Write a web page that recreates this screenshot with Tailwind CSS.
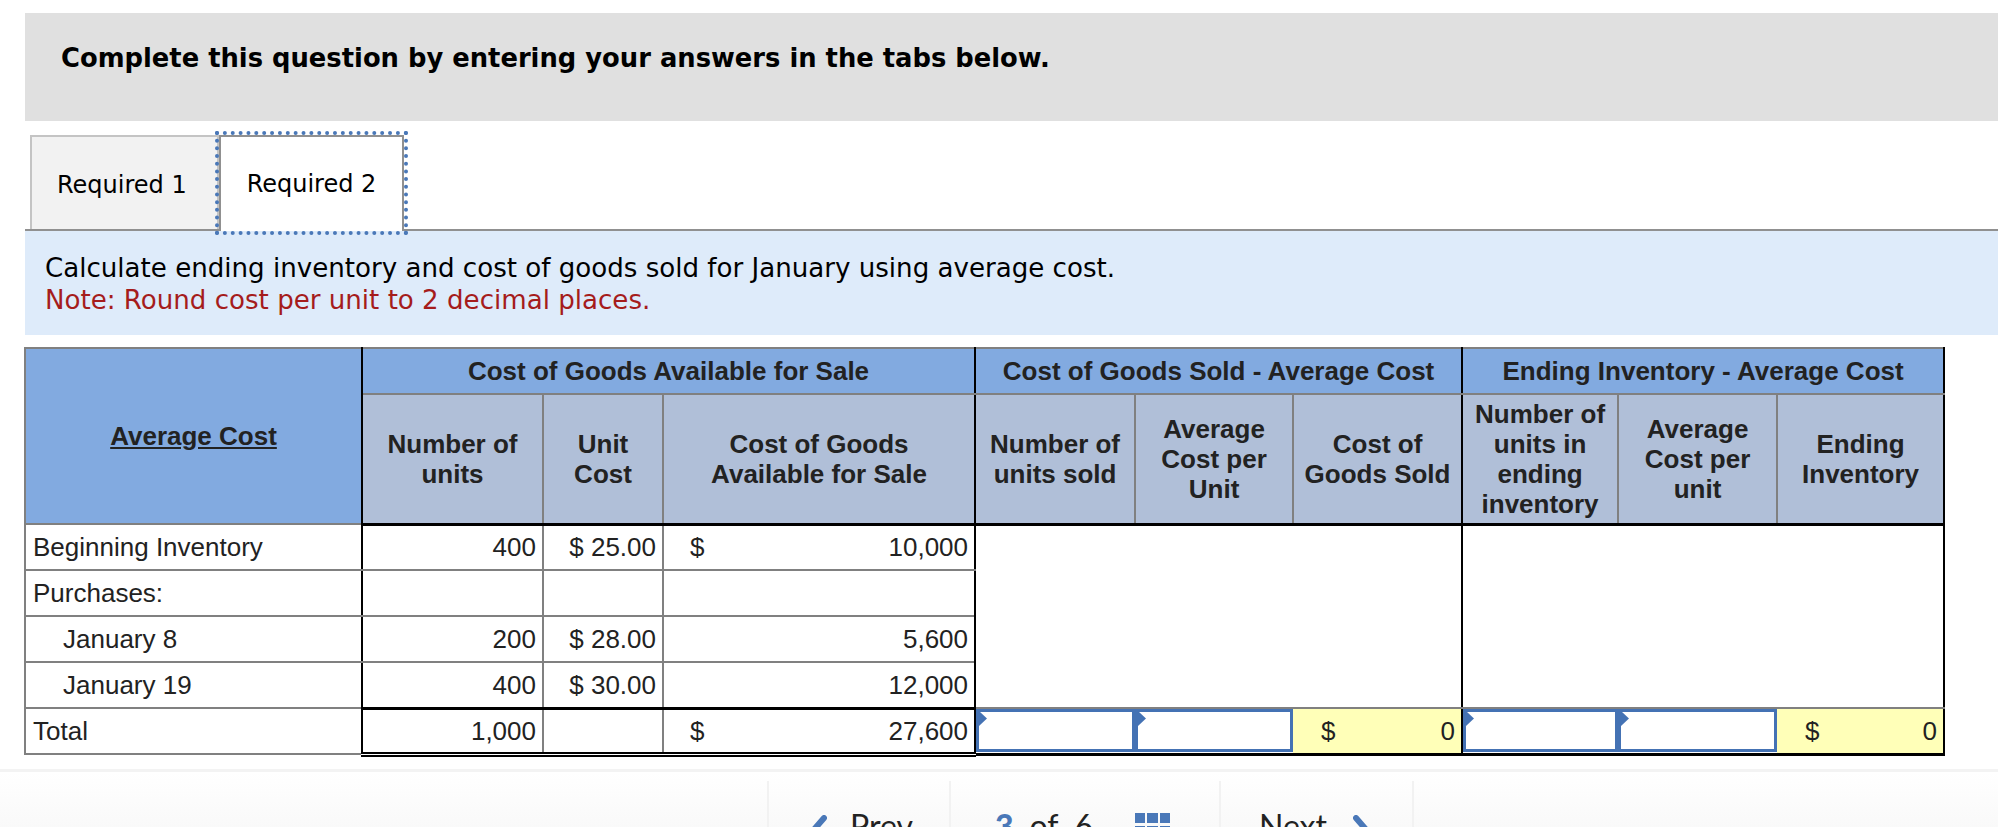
<!DOCTYPE html>
<html lang="en">
  <head>
    <meta charset="UTF-8" />
    <meta name="viewport" content="width=device-width, initial-scale=1.0" />
    <title>Average Cost</title>
    <script src="https://cdn.jsdelivr.net/npm/@tailwindcss/browser@4"></script>
  </head>

  <body class="bg-white h-[827px] overflow-hidden pt-[13px] font-['DejaVu_Sans',sans-serif] text-black">
    <!-- instructions -->
    <div class="ml-[25px] h-[108px] bg-[#e0e0e0] pl-[36px] pt-[28px]">
      <p class="text-[25.8px] leading-[34px] font-bold">Complete this question by entering your answers in the tabs below.</p>
    </div>

    <!-- tabs -->
    <div class="ml-[25px] mt-[14px] h-[96px] flex items-end border-b-2 border-[#909090] pl-[5px]">
      <div class="w-[189px] h-[94px] bg-[#f2f2f2] border-2 border-b-0 border-[#c4c4c4] flex items-center pl-[25px] pt-[3px] text-[24px]">Required 1</div>
      <div class="relative w-[185px] h-[96px] -mb-[2px] bg-white border-2 border-b-0 border-[#909090] outline-[4px] outline-dotted outline-[#4a78b8] flex items-center justify-center text-[24px]">Required 2</div>
    </div>

    <!-- question text -->
    <div class="ml-[25px] h-[104px] bg-[#deebfa] pl-[20px] pt-[21px] text-[26.1px] leading-[32px]">
      <p>Calculate ending inventory and cost of goods sold for January using average cost.</p>
      <p class="text-[#a51c1c]">Note: Round cost per unit to 2 decimal places.</p>
    </div>

    <!-- worksheet -->
    <table class="ml-[24px] mt-[12px] w-[1919px] table-fixed border-collapse font-['Liberation_Sans',Arial,sans-serif] text-[26px] leading-[30px] text-[#222]">
      <colgroup>
        <col class="w-[337px]" />
        <col class="w-[181px]" />
        <col class="w-[120px]" />
        <col class="w-[312px]" />
        <col class="w-[160px]" />
        <col class="w-[158px]" />
        <col class="w-[169px]" />
        <col class="w-[156px]" />
        <col class="w-[159px]" />
        <col class="w-[167px]" />
      </colgroup>
      <thead class="font-bold text-center">
        <tr class="h-[46px] bg-[#82aae0]">
          <th rowspan="2" class="border-2 border-[#808080] border-r-black border-b-[#808080] underline">Average Cost</th>
          <th colspan="3" class="border-2 border-[#808080] border-x-black">Cost of Goods Available for Sale</th>
          <th colspan="3" class="border-2 border-[#808080] border-x-black">Cost of Goods Sold - Average Cost</th>
          <th colspan="3" class="border-2 border-[#808080] border-x-black">Ending Inventory - Average Cost</th>
        </tr>
        <tr class="h-[130px] bg-[#b0bfd8]">
          <th class="border-2 border-[#808080] border-l-black border-b-[3px] border-b-black">Number of<br />units</th>
          <th class="border-2 border-[#808080] border-b-[3px] border-b-black">Unit<br />Cost</th>
          <th class="border-2 border-[#808080] border-r-black border-b-[3px] border-b-black">Cost of Goods<br />Available for Sale</th>
          <th class="border-2 border-[#808080] border-l-black border-b-[3px] border-b-black">Number of<br />units sold</th>
          <th class="border-2 border-[#808080] border-b-[3px] border-b-black">Average<br />Cost per<br />Unit</th>
          <th class="border-2 border-[#808080] border-r-black border-b-[3px] border-b-black">Cost of<br />Goods Sold</th>
          <th class="border-2 border-[#808080] border-l-black border-b-[3px] border-b-black">Number of<br />units in<br />ending<br />inventory</th>
          <th class="border-2 border-[#808080] border-b-[3px] border-b-black">Average<br />Cost per<br />unit</th>
          <th class="border-2 border-[#808080] border-r-black border-b-[3px] border-b-black">Ending<br />Inventory</th>
        </tr>
      </thead>
      <tbody class="font-normal">
        <tr class="h-[46px]">
          <td class="border-2 border-[#808080] border-r-black pl-[7px]">Beginning Inventory</td>
          <td class="border-2 border-[#808080] border-l-black text-right pr-[6px]">400</td>
          <td class="border-2 border-[#808080] text-right pr-[6px]">$ 25.00</td>
          <td class="border-2 border-[#808080] border-r-black pl-[26px] pr-[6px]"><div class="flex justify-between"><span>$</span><span>10,000</span></div></td>
          <td rowspan="4" colspan="3" class="border-2 border-x-black border-t-black border-b-[#808080]"></td>
          <td rowspan="4" colspan="3" class="border-2 border-x-black border-t-black border-b-[#808080]"></td>
        </tr>
        <tr class="h-[46px]">
          <td class="border-2 border-[#808080] border-r-black pl-[7px]">Purchases:</td>
          <td class="border-2 border-[#808080] border-l-black"></td>
          <td class="border-2 border-[#808080]"></td>
          <td class="border-2 border-[#808080] border-r-black"></td>
        </tr>
        <tr class="h-[46px]">
          <td class="border-2 border-[#808080] border-r-black pl-[37px]">January 8</td>
          <td class="border-2 border-[#808080] border-l-black text-right pr-[6px]">200</td>
          <td class="border-2 border-[#808080] text-right pr-[6px]">$ 28.00</td>
          <td class="border-2 border-[#808080] border-r-black text-right pr-[6px]">5,600</td>
        </tr>
        <tr class="h-[46px]">
          <td class="border-2 border-[#808080] border-r-black pl-[37px]">January 19</td>
          <td class="border-2 border-[#808080] border-l-black border-b-[3px] border-b-black text-right pr-[6px]">400</td>
          <td class="border-2 border-[#808080] border-b-[3px] border-b-black text-right pr-[6px]">$ 30.00</td>
          <td class="border-2 border-[#808080] border-r-black border-b-[3px] border-b-black text-right pr-[6px]">12,000</td>
        </tr>
        <tr class="h-[46px]">
          <td class="border-2 border-[#808080] border-r-black pl-[7px]">Total</td>
          <td class="border-x-2 border-x-[#808080] border-l-black border-b-[5px] border-double border-b-black text-right pr-[6px]">1,000</td>
          <td class="border-x-2 border-x-[#808080] border-b-[5px] border-double border-b-black"></td>
          <td class="border-r-2 border-r-black border-b-[5px] border-double border-b-black pl-[26px] pr-[6px]"><div class="flex justify-between"><span>$</span><span>27,600</span></div></td>
          <td class="relative p-0 border-b-[3px] border-b-black">
            <div class="h-[43px] border-[3px] border-[#4472b4] bg-white"></div>
            <svg class="absolute left-0 top-[2px]" width="11" height="15" viewBox="0 0 11 15"><polygon points="0,0 3,0 11,7.5 3,15 0,15" fill="#4472b4" /></svg>
          </td>
          <td class="relative p-0 border-b-[3px] border-b-black">
            <div class="h-[43px] border-[3px] border-[#4472b4] bg-white"></div>
            <svg class="absolute left-0 top-[2px]" width="11" height="15" viewBox="0 0 11 15"><polygon points="0,0 3,0 11,7.5 3,15 0,15" fill="#4472b4" /></svg>
          </td>
          <td class="bg-[#ffffb8] border-r-2 border-r-black border-b-[3px] border-b-black pl-[28px] pr-[6px]"><div class="flex justify-between"><span>$</span><span>0</span></div></td>
          <td class="relative p-0 border-b-[3px] border-b-black">
            <div class="h-[43px] border-[3px] border-[#4472b4] bg-white"></div>
            <svg class="absolute left-0 top-[2px]" width="11" height="15" viewBox="0 0 11 15"><polygon points="0,0 3,0 11,7.5 3,15 0,15" fill="#4472b4" /></svg>
          </td>
          <td class="relative p-0 border-b-[3px] border-b-black">
            <div class="h-[43px] border-[3px] border-[#4472b4] bg-white"></div>
            <svg class="absolute left-0 top-[2px]" width="11" height="15" viewBox="0 0 11 15"><polygon points="0,0 3,0 11,7.5 3,15 0,15" fill="#4472b4" /></svg>
          </td>
          <td class="bg-[#ffffb8] border-r-2 border-r-black border-b-[3px] border-b-black pl-[28px] pr-[6px]"><div class="flex justify-between"><span>$</span><span>0</span></div></td>
        </tr>
      </tbody>
    </table>

    <!-- pager -->
    <div class="mt-[12px] h-[60px] border-t-[3px] border-[#f3f3f3] bg-linear-to-b from-white to-[#f9f9f9] pt-[9px] pl-[767px]">
      <div class="flex h-[60px] font-['Lato',sans-serif] text-[32px] leading-[38px] text-[#222]">
        <div class="w-[184px] border-x-2 border-[#f2f2f2] pt-[25px] pl-[38px] flex gap-[23px]">
          <svg class="mt-[9px] shrink-0" width="20" height="30" viewBox="0 0 20 30" fill="none" stroke="#4a78b8" stroke-width="6" stroke-linecap="round"><path d="M17 3 L4 18 L17 33" /></svg>
          <span class="mt-[1px]">Prev</span>
        </div>
        <div class="w-[268px] pt-[25px] pl-[44px] flex">
          <span class="mt-[1px] font-black text-[#4a78b8]">3</span>
          <span class="mt-[1px] ml-[16px]">of</span>
          <span class="mt-[1px] ml-[16px]">6</span>
          <div class="ml-[42px] mt-[7px] grid grid-cols-3 gap-x-[2px] gap-y-[3px] w-[35px] shrink-0 content-start">
            <span class="h-[10px] bg-[#4a78b8]"></span><span class="h-[10px] bg-[#4a78b8]"></span><span class="h-[10px] bg-[#4a78b8]"></span>
            <span class="h-[10px] bg-[#4a78b8]"></span><span class="h-[10px] bg-[#4a78b8]"></span><span class="h-[10px] bg-[#4a78b8]"></span>
          </div>
        </div>
        <div class="w-[195px] border-x-2 border-[#f2f2f2] pt-[25px] pl-[38px] flex gap-[26px]">
          <span class="mt-[1px]">Next</span>
          <svg class="mt-[9px] shrink-0" width="20" height="30" viewBox="0 0 20 30" fill="none" stroke="#4a78b8" stroke-width="6" stroke-linecap="round"><path d="M3 3 L16 18 L3 33" /></svg>
        </div>
      </div>
    </div>
  </body>
</html>
